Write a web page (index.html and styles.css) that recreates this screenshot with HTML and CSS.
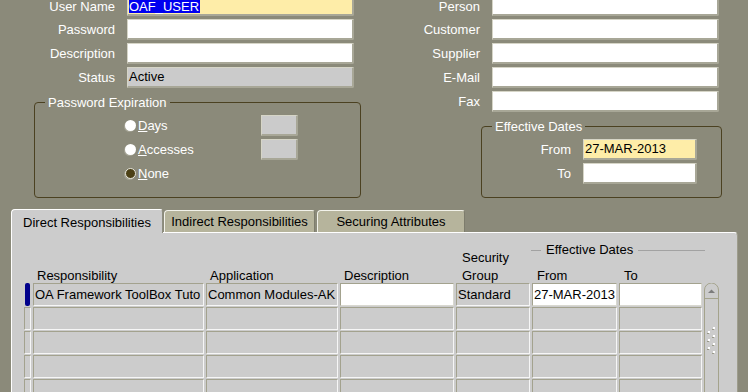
FILE: index.html
```html
<!DOCTYPE html>
<html lang="en">
<head>
  <meta charset="UTF-8" />
  <title>Users</title>
  <link rel="stylesheet" href="styles.css">
</head>
<body>
  <div class="top">
    <div class="col">
      <div class="form form-left">
        <label class="first">User Name</label><div class="field req first"><span class="sel">OAF_USER</span></div>
        <label>Password</label><div class="field"></div>
        <label>Description</label><div class="field"></div>
        <label>Status</label><div class="field off">Active</div>
      </div>

      <!-- Password expiration -->
      <div class="group group-pw">
        <span class="group-title">Password Expiration</span>
        <div class="radios">
          <div class="radio-item"><span class="radio"></span><span><u>D</u>ays</span></div><div class="box"></div>
          <div class="radio-item"><span class="radio"></span><span><u>A</u>ccesses</span></div><div class="box"></div>
          <div class="radio-item"><span class="radio on"></span><span><u>N</u>one</span></div><div></div>
        </div>
      </div>
    </div>

    <div class="col">
      <div class="form form-right">
        <label class="first">Person</label><div class="field first"></div>
        <label>Customer</label><div class="field"></div>
        <label>Supplier</label><div class="field"></div>
        <label>E-Mail</label><div class="field"></div>
        <label>Fax</label><div class="field"></div>
      </div>

      <!-- Effective dates -->
      <div class="group group-dates">
        <span class="group-title">Effective Dates</span>
        <div class="form form-dates">
          <label>From</label><div class="field req">27-MAR-2013</div>
          <label>To</label><div class="field"></div>
        </div>
      </div>
    </div>
  </div>

  <div class="tabs">
    <div class="tab active">Direct Responsibilities</div>
    <div class="tab">Indirect Responsibilities</div>
    <div class="tab">Securing Attributes</div>
  </div>

  <div class="panel">
    <div class="grid-head">
      <div class="eff-head">Effective Dates</div>
      <div class="h h-resp">Responsibility</div>
      <div class="h h-app">Application</div>
      <div class="h h-desc">Description</div>
      <div class="h h-sec">Security<br>Group</div>
      <div class="h h-from">From</div>
      <div class="h h-to">To</div>
    </div>

    <div class="grid-rows">
      <div class="mark current"></div>
      <div class="cell">OA Framework ToolBox Tuto</div>
      <div class="cell">Common Modules-AK</div>
      <div class="cell white"></div>
      <div class="cell">Standard</div>
      <div class="cell white">27-MAR-2013</div>
      <div class="cell white"></div>

      <svg class="vscroll" width="15" height="120" viewBox="0 0 15 120">
        <path d="M0.5 120 V7 A7 7 0 0 1 14.5 7 V120" fill="#cccccc" stroke="#a4a38c"/>
        <line x1="1" y1="15.5" x2="14" y2="15.5" stroke="#a4a38c"/>
        <polygon points="4,10 7.5,6.5 11,10" fill="#7c7c7c"/>
        <g fill="#ffffff">
          <rect x="4" y="48" width="2" height="2"/>
          <rect x="4" y="56" width="2" height="2"/>
          <rect x="4" y="64" width="2" height="2"/>
          <rect x="9" y="44" width="2" height="2"/>
          <rect x="9" y="52" width="2" height="2"/>
          <rect x="9" y="60" width="2" height="2"/>
          <rect x="9" y="68" width="2" height="2"/>
        </g>
        <g fill="#9a9a8a">
          <rect x="3" y="50" width="2" height="1"/>
          <rect x="3" y="58" width="2" height="1"/>
          <rect x="3" y="66" width="2" height="1"/>
          <rect x="8" y="46" width="2" height="1"/>
          <rect x="8" y="54" width="2" height="1"/>
          <rect x="8" y="62" width="2" height="1"/>
          <rect x="8" y="70" width="2" height="1"/>
        </g>
      </svg>

      <div class="mark"></div><div class="cell"></div><div class="cell"></div><div class="cell"></div><div class="cell"></div><div class="cell"></div><div class="cell"></div>
      <div class="mark"></div><div class="cell"></div><div class="cell"></div><div class="cell"></div><div class="cell"></div><div class="cell"></div><div class="cell"></div>
      <div class="mark"></div><div class="cell"></div><div class="cell"></div><div class="cell"></div><div class="cell"></div><div class="cell"></div><div class="cell"></div>
      <div class="mark"></div><div class="cell"></div><div class="cell"></div><div class="cell"></div><div class="cell"></div><div class="cell"></div><div class="cell"></div>
    </div>
  </div>
</body>
</html>
```

FILE: styles.css
```css
* {
  box-sizing: border-box;
}

html, body {
  height: 100%;
  overflow: hidden;
}

body {
  margin: 0;
  background-color: #8b8a7a;
  color: #fff;
  font-family: 'Liberation Sans', Arial, sans-serif;
  font-size: 13px;
}

.top {
  display: grid;
  grid-template-columns: 374px 374px;
}

/* label + field grids */
.form {
  display: grid;
  column-gap: 12px;
  row-gap: 3px;
  grid-auto-rows: 21px;
}

.form-left,
.form-right {
  grid-template-rows: 16px;
}

.form-left {
  grid-template-columns: 115px 227px;
}

.form-right {
  grid-template-columns: 106px 227px;
}

.form-dates {
  grid-template-columns: 89px 114px;
}

.form label {
  text-align: right;
  line-height: 21px;
  white-space: nowrap;
}

.form label.first {
  line-height: 13px;
}

.field {
  height: 21px;
  background-color: #fff;
  color: #000;
  border: 1px solid #d6d5c7;
  border-right: 2px solid #a8a797;
  border-bottom: 2px solid #a8a797;
  border-radius: 0 0 2px 0;
  padding-left: 1px;
  line-height: 18px;
  white-space: nowrap;
  overflow: hidden;
}

/* top row is scrolled half out of view */
.field.first {
  margin-top: -5px;
  padding-top: 4px;
  line-height: 13px;
}

.field.req {
  background-color: #feeda8;
}

.field.off {
  background-color: #cbcbcb;
}

.sel {
  display: inline-block;
  background-color: #0000f0;
  color: #fff;
  padding-right: 1px;
}

/* group boxes */
.group {
  position: relative;
  border: 1px solid #4b4121;
  border-radius: 4px;
  margin-top: 14px;
}

.group-title {
  position: absolute;
  top: -8px;
  left: 10px;
  padding: 0 3px;
  line-height: 15px;
  background-color: #8b8a7a;
  white-space: nowrap;
}

.group-pw {
  margin-left: 34px;
  width: 327px;
  height: 96px;
}

.group-dates {
  margin-left: 107px;
  width: 241px;
  height: 72px;
  padding-top: 12px;
}

.radios {
  display: grid;
  grid-template-columns: 136px 37px;
  grid-auto-rows: 21px;
  row-gap: 3px;
  padding: 12px 0 0 90px;
}

.radio-item {
  display: flex;
  align-items: center;
  gap: 2px;
}

.radio {
  width: 11px;
  height: 11px;
  border-radius: 50%;
  background-color: #fff;
  box-shadow: -1px 1px 0 #a3a293;
}

.radio.on {
  background-color: #4b4015;
  border: 1px solid #e9e8de;
}

.box {
  background-color: #cbcbcb;
  border: 1px solid #d6d5c7;
  border-right: 2px solid #a8a797;
  border-bottom: 2px solid #a8a797;
  border-radius: 0 0 2px 0;
}

/* tabs */
.tabs {
  display: flex;
  align-items: flex-end;
  margin: 11px 0 0 11px;
  height: 23px;
  color: #000;
}

.tab {
  height: 22px;
  padding-top: 2px;
  line-height: 18px;
  text-align: center;
  background-color: #b6b49c;
  border-top: 1px solid #f2f2ea;
  border-left: 1px solid #f2f2ea;
  border-right: 1px solid #7d7c6c;
  border-radius: 4px 3px 0 0;
  white-space: nowrap;
}

.tab:nth-child(1) {
  width: 152px;
}

.tab:nth-child(2) {
  width: 151px;
  margin-left: 1px;
}

.tab:nth-child(3) {
  width: 148px;
  margin-left: 2px;
}

.tab.active {
  position: relative;
  z-index: 1;
  height: 24px;
  margin-bottom: -1px;
  line-height: 21px;
  background-color: #cccccc;
  border-top-color: #fff;
  border-left-color: #fff;
  border-right-color: #8e8e80;
}

.panel {
  margin-left: 11px;
  width: 727px;
  height: 160px;
  overflow: hidden;
  background-color: #cccccc;
  border-top: 1px solid #fff;
  border-left: 1px solid #fff;
  border-right: 1px solid #9d9c8c;
  border-radius: 0 4px 0 0;
  padding-left: 12px;
  color: #000;
}

/* multi-row block */
.grid-head,
.grid-rows {
  display: grid;
  grid-template-columns: 7px 171px 132px 114px 74px 85px 83px 15px;
  column-gap: 2px;
}

.grid-head {
  grid-template-rows: 16px 9px 15px;
  padding-top: 10px;
  height: 50px;
}

.h {
  grid-row: 3;
  padding-left: 4px;
  line-height: 15px;
  white-space: nowrap;
}

.h-resp { grid-column: 2; }
.h-app { grid-column: 3; }
.h-desc { grid-column: 4; }
.h-from { grid-column: 6; padding-left: 5px; }
.h-to { grid-column: 7; padding-left: 5px; }

.h-sec {
  grid-column: 5;
  grid-row: 1 / 4;
  align-self: end;
  margin-bottom: -2px;
  padding-left: 6px;
  line-height: 18px;
}

.eff-head {
  grid-column: 6 / 8;
  grid-row: 1;
  display: flex;
  align-items: center;
  gap: 5px;
  margin: -2px -3px 0 -1px;
  line-height: 16px;
  white-space: nowrap;
}

.eff-head::before,
.eff-head::after {
  content: '';
  height: 1px;
  background-color: #a2a2a2;
}

.eff-head::before {
  width: 10px;
}

.eff-head::after {
  flex: 1;
}

.grid-rows {
  grid-auto-rows: 23px;
  row-gap: 1px;
}

.cell {
  background-color: #cccccc;
  border: 1px solid;
  border-color: #a3a28e #f6f6f6 #f6f6f6 #a3a28e;
  padding: 1px 0 0 1px;
  line-height: 20px;
  white-space: nowrap;
  overflow: hidden;
}

.cell.white {
  background-color: #fff;
  border-color: #a3a28e #d8d8d0 #d8d8d0 #a3a28e;
}

.mark {
  border: 1px solid;
  border-color: #a3a28e #f6f6f6 #f6f6f6 #a3a28e;
}

.mark.current {
  border: none;
  margin: 0 1px;
  border-radius: 2px;
  background-color: #00008b;
}

.vscroll {
  grid-column: 8;
  grid-row: 1 / 6;
  display: block;
}
```
